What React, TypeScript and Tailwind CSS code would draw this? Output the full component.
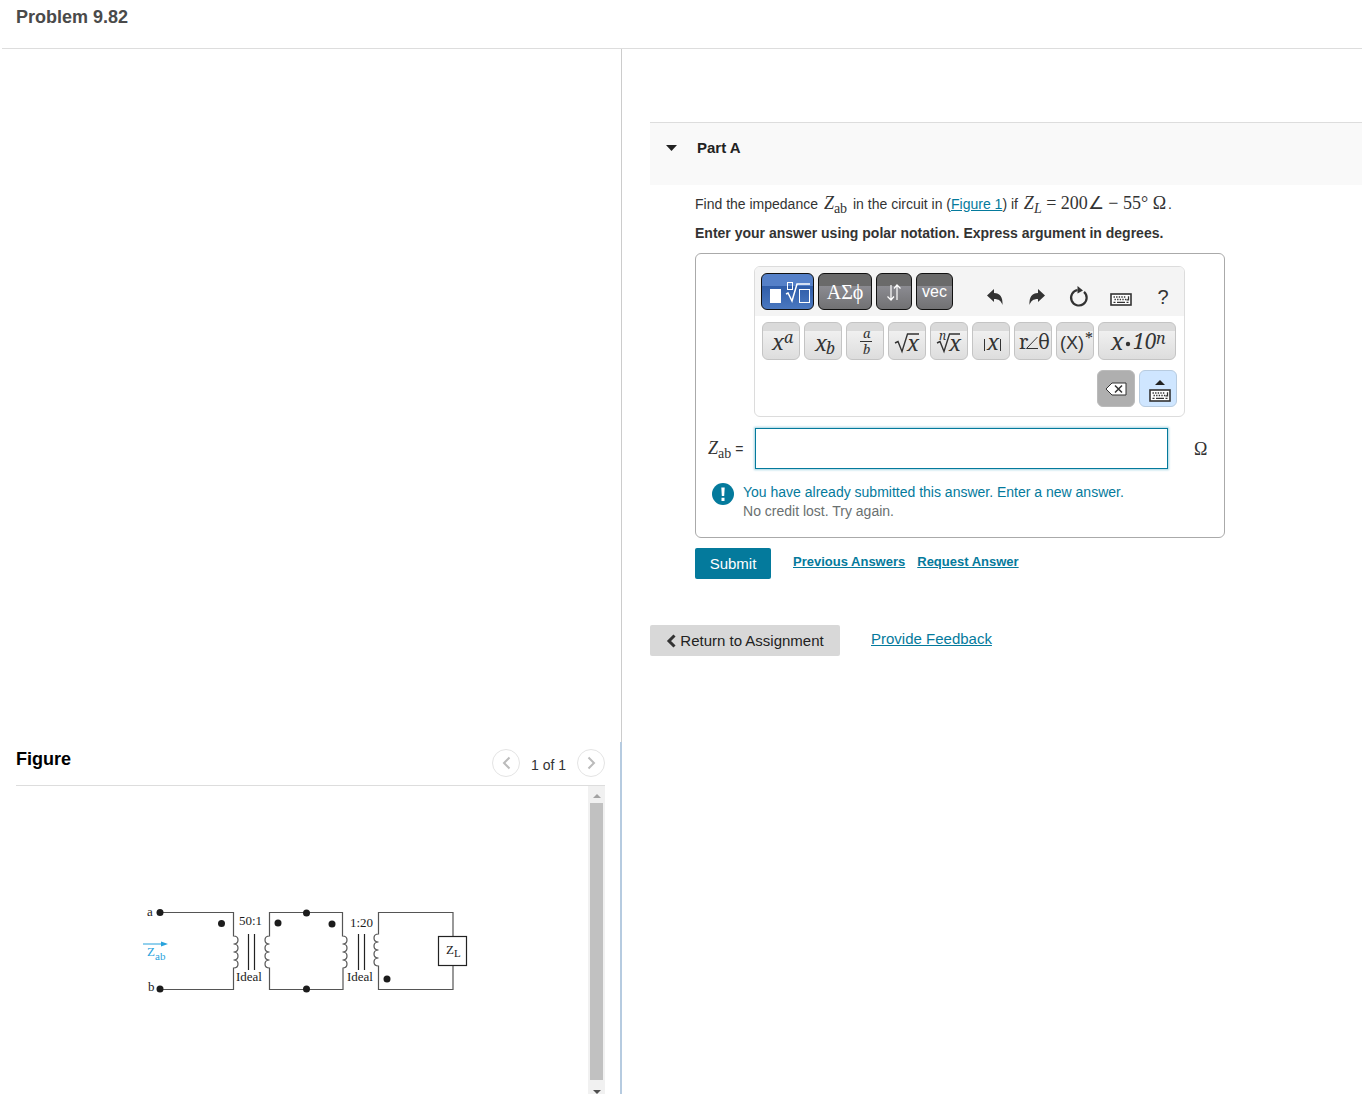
import React, { useState } from "react";

const SERIF = "font-['Liberation_Serif','Times_New_Roman',serif]";

const Zab: React.FC = () => (
  <span className={`${SERIF} text-lg leading-5`}>
    <i>Z</i>
    <sub className="text-sm leading-none">ab</sub>
  </span>
);

const Keyboard: React.FC = () => (
  <svg width="22" height="13" viewBox="0 0 22 13" aria-hidden="true">
    <rect x="1" y="1" width="20" height="11" fill="#fff" stroke="#333" strokeWidth="1.6" />
    <path d="M3.500 4h13M4.500 6.500h12" stroke="#333" strokeWidth="1.3" strokeDasharray="1.4 1.2" />
    <path d="M3.500 9.300h2M7 9.300h8M16.500 9.300h2M18.500 3.300v3.500h-2" stroke="#333" strokeWidth="1.3" fill="none" />
  </svg>
);

type KeyProps = { label: string; wide?: boolean; children: React.ReactNode };

const Key: React.FC<KeyProps> = ({ label, wide, children }) => (
  <button
    aria-label={label}
    className={`${wide ? "w-[78px]" : "w-[38px]"} h-[38px] shrink-0 flex items-center justify-center rounded-md border border-[#c4c4c4] bg-[linear-gradient(#dadada_0,#dadada_8px,#f0f0f0_8px,#dddddd_100%)]`}
  >
    <svg
      width={wide ? 76 : 36}
      height="36"
      viewBox={wide ? "0 0 76 36" : "0 0 36 36"}
      fill="#333"
      className="font-['Noto_Serif','Liberation_Serif',serif]"
    >
      {children}
    </svg>
  </button>
);

const ModeButton: React.FC<{ label: string; className: string; children: React.ReactNode }> = ({
  label,
  className,
  children,
}) => (
  <button
    aria-label={label}
    className={`${className} h-[37px] shrink-0 flex items-center justify-center rounded-md border border-[#111] text-white`}
  >
    {children}
  </button>
);

const GRAY = "bg-[linear-gradient(#6a6a6a_0,#6a6a6a_12px,#8b8b91_12px,#717173_100%)]";

const Toolbar: React.FC = () => (
  <div className="w-[431px] h-[151px] rounded-md border border-[#dcdcdc] overflow-hidden bg-white">
    <div className="h-[49px] bg-[#f4f4f4] flex pt-1.5 pl-1.5">
      <div className="flex gap-1">
        <ModeButton
          label="Templates"
          className="w-[53px] bg-[linear-gradient(#5580c8_0,#5580c8_12px,#2f5ca8_12px,#4a78c0_100%)]"
        >
          <svg width="51" height="35" viewBox="0 0 51 35" fill="none" stroke="#fff">
            <rect x="8" y="15" width="11" height="14" fill="#fff" stroke="none" />
            <rect x="25.5" y="8.500" width="5" height="7" />
            <path d="M24 20l2-1 4 8 5-17h13" strokeWidth="1.5" />
            <rect x="37.500" y="15.500" width="10" height="13" />
          </svg>
        </ModeButton>
        <ModeButton label="Greek symbols" className={`w-[54px] ${GRAY}`}>
          <span className={`${SERIF} text-xl leading-6`}>ΑΣϕ</span>
        </ModeButton>
        <ModeButton label="Arrows" className={`w-9 ${GRAY}`}>
          <svg width="16" height="18" viewBox="0 0 16 18" fill="none" stroke="#fff" strokeWidth="1.2">
            <path d="M5 2v15M1.500 13.500L5 17l3-3.500M11 17V2M8 5.500L11 2l3.500 3.500" />
          </svg>
        </ModeButton>
        <ModeButton label="Vectors" className={`w-[37px] ${GRAY}`}>
          <span className="text-base leading-5">vec</span>
        </ModeButton>
      </div>
      <div className="flex ml-[21px] pt-1">
        <button aria-label="Undo" className="w-[42px] h-10 flex items-center justify-center">
          <svg width="16" height="17" viewBox="0 0 16 17" fill="#333">
            <path d="M0 6.500L7 0v4c6 0 9 4 8.500 12-1.500-4-3.500-6-8.500-6v3z" />
          </svg>
        </button>
        <button aria-label="Redo" className="w-[42px] h-10 flex items-center justify-center">
          <svg width="16" height="17" viewBox="0 0 16 17" fill="#333">
            <path d="M16 6.500L9 0v4C3 4 0 8 .5 16c1.500-4 3.500-6 8.500-6v3z" />
          </svg>
        </button>
        <button aria-label="Reset" className="w-[42px] h-10 flex items-center justify-center">
          <svg width="20" height="22" viewBox="0 0 20 22" fill="none">
            <path d="M15 5.800A7.800 7.800 0 1 1 8.500 4" stroke="#333" strokeWidth="2.200" />
            <path d="M8.500 0L14 4.500 8.500 7.500z" fill="#333" />
          </svg>
        </button>
        <button aria-label="Keyboard shortcuts" className="w-[42px] h-10 pt-1 flex items-center justify-center">
          <Keyboard />
        </button>
        <button aria-label="Help" className="w-[42px] h-10 flex items-center justify-center text-xl text-[#333]">
          ?
        </button>
      </div>
    </div>
    <div className="flex gap-1 pl-[7px] pt-1.5">
      <Key label="x superscript a">
        <text x="9" y="27" fontSize="22" fontStyle="italic">x</text>
        <text x="21" y="20" fontSize="16" fontStyle="italic">a</text>
      </Key>
      <Key label="x subscript b">
        <text x="10" y="28" fontSize="22" fontStyle="italic">x</text>
        <text x="21" y="31" fontSize="16" fontStyle="italic">b</text>
      </Key>
      <Key label="a over b">
        <text x="16" y="15" fontSize="13" fontStyle="italic">a</text>
        <path d="M13 18.500h12" stroke="#333" />
        <text x="16" y="31" fontSize="13" fontStyle="italic">b</text>
      </Key>
      <Key label="Square root">
        <path d="M6 20l3-1.500 4 10L18.500 11H30" fill="none" stroke="#333" strokeWidth="1.400" />
        <text x="18" y="28" fontSize="22" fontStyle="italic">x</text>
      </Key>
      <Key label="nth root">
        <path d="M6 20l3-1.500 4 10L18.500 11H29" fill="none" stroke="#333" strokeWidth="1.400" />
        <text x="8" y="17" fontSize="12" fontStyle="italic">n</text>
        <text x="18" y="28" fontSize="22" fontStyle="italic">x</text>
      </Key>
      <Key label="Absolute value">
        <path d="M11.500 16v12M27.500 16v12" stroke="#333" />
        <text x="14" y="27" fontSize="22" fontStyle="italic">x</text>
      </Key>
      <Key label="Polar form">
        <text x="4" y="26" fontSize="20">r</text>
        <path d="M22.500 14L11.500 25.500H23" fill="none" stroke="#333" />
        <text x="23" y="26" fontSize="20">θ</text>
      </Key>
      <Key label="Complex conjugate">
        <text x="3" y="26" fontSize="18" fontFamily="Liberation Sans">(X)</text>
        <text x="28" y="22" fontSize="16">*</text>
      </Key>
      <Key label="Scientific notation" wide>
        <text x="12" y="27" fontSize="23" fontStyle="italic">x</text>
        <circle cx="29" cy="21" r="2.200" />
        <text x="34" y="26" fontSize="21" fontStyle="italic">10</text>
        <text x="57" y="21" fontSize="16" fontStyle="italic">n</text>
      </Key>
    </div>
    <div className="flex justify-end gap-1 pr-[7px] pt-2.5">
      <button
        aria-label="Backspace"
        className="w-[38px] h-[37px] flex items-center justify-center rounded-md border border-[#bbb] bg-[#afafaf]"
      >
        <svg width="22" height="14" viewBox="0 0 22 14" fill="#fff" stroke="#333">
          <path d="M1 7l6-6h14v12H7z" />
          <path d="M10 3.500l7 7M17 3.500l-7 7" strokeWidth="1.500" />
        </svg>
      </button>
      <button
        aria-label="Hide keyboard"
        className="w-[38px] h-[37px] pt-1 pl-1 flex flex-col gap-1 items-center justify-center rounded-md border border-[#b8cce0] bg-[#cfe6ff]"
      >
        <svg width="10" height="5" viewBox="0 0 10 5" fill="#222">
          <path d="M0 5l5-5 5 5z" />
        </svg>
        <Keyboard />
      </button>
    </div>
  </div>
);

const Circuit: React.FC = () => (
  <svg
    width="336"
    height="100"
    viewBox="140 900 336 100"
    fill="none"
    stroke="#555"
    strokeWidth="1.200"
    className={SERIF}
  >
    <path d="M160 912.500h73.500V936c6 0 6 8 0 8 6 0 6 8 0 8 6 0 6 8 0 8 6 0 6 8 0 8v21.500H160" />
    <path d="M343 968v21.500h-73.500V968c-6 0-6-8 0-8-6 0-6-8 0-8-6 0-6-8 0-8-6 0-6-8 0-8v-23.500H342.500V936c6 0 6 8 0 8 6 0 6 8 0 8 6 0 6 8 0 8 6 0 6 8 0 8" />
    <path d="M453 936v-23.500h-74.500V934c-6 0-6 8 0 8-6 0-6 8 0 8-6 0-6 8 0 8-6 0-6 8 0 8v23.500h74.500V966" />
    <path d="M248.500 934v36M254.500 934v36M358.500 934v36M364.500 934v36" stroke="#222" />
    <rect x="438.500" y="936.500" width="28" height="29" stroke="#222" />
    <g fill="#1c1c1c" stroke="none">
      <circle cx="160" cy="912.500" r="3.500" />
      <circle cx="160" cy="989" r="3.500" />
      <circle cx="306.500" cy="913" r="3.500" />
      <circle cx="306.500" cy="989" r="3.500" />
      <circle cx="221.500" cy="923.500" r="3.500" />
      <circle cx="278" cy="923" r="3.500" />
      <circle cx="332" cy="924" r="3.500" />
      <circle cx="387" cy="979" r="3.500" />
      <g fontSize="13">
        <text x="147" y="916">a</text>
        <text x="148" y="991">b</text>
        <text x="239" y="925">50:1</text>
        <text x="350" y="927">1:20</text>
        <text x="236" y="981">Ideal</text>
        <text x="347" y="981">Ideal</text>
        <text x="446" y="954">Z</text>
        <text x="454" y="957" fontSize="11">L</text>
      </g>
    </g>
    <g fill="#27a2dc" stroke="none">
      <path d="M143 943.500h18v-2l7 2.500-7 2.500v-2h-18z" />
      <text x="147" y="956" fontSize="13">Z</text>
      <text x="155" y="960" fontSize="11">ab</text>
    </g>
  </svg>
);

const FigurePanel: React.FC = () => (
  <section className="h-[352px] shrink-0 pl-4 pr-[15px] border-r-2 border-[#b6cbe0] flex flex-col">
    <div className="h-11 shrink-0 border-b border-[#ddd] flex items-start justify-between">
      <h2 className="text-lg leading-6 pt-[5px] font-bold text-black">Figure</h2>
      <div className="flex items-center pt-[7px]">
        <button
          aria-label="Previous figure"
          className="w-7 h-7 rounded-full border border-[#e4e4e4] flex items-center justify-center"
        >
          <svg width="9" height="14" viewBox="0 0 9 14" fill="none" stroke="#bbb" strokeWidth="2">
            <path d="M7.500 1.500L2 7l5.500 5.500" />
          </svg>
        </button>
        <span className="w-[57px] pt-1 text-center text-sm">1 of 1</span>
        <button
          aria-label="Next figure"
          className="w-7 h-7 rounded-full border border-[#e4e4e4] flex items-center justify-center"
        >
          <svg width="9" height="14" viewBox="0 0 9 14" fill="none" stroke="#bbb" strokeWidth="2">
            <path d="M1.500 1.500L7 7l-5.500 5.500" />
          </svg>
        </button>
      </div>
    </div>
    <div className="flex-1 flex min-h-0">
      <div className="flex-1 pl-[124px] pt-[114px]">
        <Circuit />
      </div>
      {/* scrollbar */}
      <div className="w-[17px] bg-[#f1f1f1] flex flex-col items-center">
        <div className="h-[17px] shrink-0 pt-0.5 flex items-center">
          <svg width="8" height="4" viewBox="0 0 8 4" fill="#a3a3a3">
            <path d="M0 4l4-4 4 4z" />
          </svg>
        </div>
        <div className="w-[13px] flex-1 bg-[#c1c1c1]" />
        <div className="h-3.5 shrink-0 flex items-end">
          <svg width="8" height="4" viewBox="0 0 8 4" fill="#505050">
            <path d="M0 0h8L4 4z" />
          </svg>
        </div>
      </div>
    </div>
  </section>
);

const PartA: React.FC = () => {
  const [answer, setAnswer] = useState("");

  return (
    <section>
      <div className="h-[63px] border-t border-[#ddd] bg-[#f9f9f9] flex items-start pl-4 pt-[15px]">
        <button className="flex items-center gap-5 text-[15px] leading-5 font-bold text-[#222]">
          <svg width="11" height="6" viewBox="0 0 11 6" fill="#222">
            <path d="M0 0h11L5.500 6z" />
          </svg>
          Part A
        </button>
      </div>
      <div className="pl-[45px] pr-4">
        <p className="h-5 mt-2 text-sm leading-5 whitespace-nowrap">
          Find the impedance{" "}
          <span className="mx-0.5">
            <Zab />
          </span>{" "}
          in the circuit in (
          <a href="#figure" className="text-[#047a9c] underline">Figure 1</a>) if{" "}
          <span className={`${SERIF} mx-0.5 text-lg leading-5`}>
            <i>
              Z<sub className="text-sm leading-none">L</sub>
            </i>{" "}
            = 200∠ − 55° Ω
          </span>
          .
        </p>
        <p className="mt-2.5 text-sm leading-5 font-bold">
          Enter your answer using polar notation. Express argument in degrees.
        </p>
        <div className="max-w-[530px] h-[285px] mt-2.5 rounded-md border border-[#aaa] pt-3">
          <div className="pl-[58px]">
            <Toolbar />
          </div>
          <div className="flex items-center mt-[11px] pl-3">
            <label htmlFor="answer" className="w-[47px] shrink-0 text-sm whitespace-nowrap">
              <Zab /> =
            </label>
            <input
              id="answer"
              value={answer}
              onChange={(e) => setAnswer(e.target.value)}
              className="w-[413px] h-[41px] px-2 border border-[#047a9c] outline-none shadow-[0_0_2px_1px_#a8d5e2]"
            />
            <span className={`${SERIF} ml-[26px] text-lg`}>Ω</span>
          </div>
          <div className="flex gap-[9px] pl-4 mt-3.5">
            <svg width="22" height="22" viewBox="0 0 22 22" className="shrink-0">
              <circle cx="11" cy="11" r="11" fill="#047a9c" />
              <path d="M9.300 4.500h3.400l-.5 8.500h-2.400zM9.500 14.700h3V18h-3z" fill="#fff" />
            </svg>
            <div className="text-sm leading-[19px]">
              <p className="text-[#047a9c]">You have already submitted this answer. Enter a new answer.</p>
              <p className="text-[#6a7070]">No credit lost. Try again.</p>
            </div>
          </div>
        </div>
        <div className="flex items-start mt-2.5">
          <button className="w-[76px] h-[31px] pt-px rounded-xs bg-[#047a9c] text-white text-[15px]">Submit</button>
          <a href="#previous" className="mt-1 ml-[22px] text-[13px] leading-5 font-bold text-[#047a9c] underline">
            Previous Answers
          </a>
          <a href="#request" className="mt-1 ml-3 text-[13px] leading-5 font-bold text-[#047a9c] underline">
            Request Answer
          </a>
        </div>
      </div>
    </section>
  );
};

export default function App() {
  return (
    <div className="min-h-screen flex flex-col bg-white text-[#333] font-['Liberation_Sans',Arial,sans-serif]">
      <header className="h-[49px] ml-0.5 pl-3.5 pt-[5px] border-b border-[#ddd]">
        <h1 className="text-lg leading-6 font-bold text-[#4a4a4a]">Problem 9.82</h1>
      </header>
      <main className="flex-1 flex">
        <div className="w-[45.67%] shrink-0 flex flex-col">
          <div className="flex-1 border-r border-[#ccc]" />
          <FigurePanel />
        </div>
        <div className="flex-1 min-w-0 pl-7 pt-[73px]">
          <PartA />
          <div className="flex items-start mt-[46px]">
            <button className="w-[190px] h-[31px] pt-px rounded-xs bg-[#d8d8d8] text-[15px] text-[#222] flex items-center justify-center gap-1">
              <svg width="10" height="14" viewBox="0 0 10 14" fill="none" stroke="#333" strokeWidth="3">
                <path d="M8.500 1.500L3 7l5.500 5.500" />
              </svg>
              Return to Assignment
            </button>
            <a href="#feedback" className="mt-1 ml-[31px] text-[15px] leading-5 text-[#047a9c] underline">
              Provide Feedback
            </a>
          </div>
        </div>
      </main>
    </div>
  );
}
